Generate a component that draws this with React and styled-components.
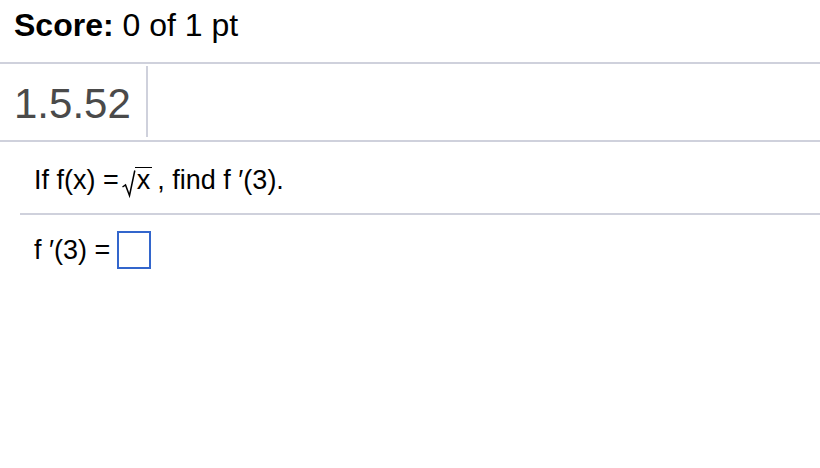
import React from 'react'
import styled, { createGlobalStyle } from 'styled-components'

const GlobalStyle = createGlobalStyle`
  html, body {
    margin: 0;
    padding: 0;
    background: #fff;
  }
  body {
    font-family: "Liberation Sans", Arial, Helvetica, sans-serif;
    color: #000;
  }
`

const Page = styled.div`
  width: 820px;
  height: 468px;
  overflow: hidden;
  background: #fff;
`

const ScoreBar = styled.div`
  height: 64px;
  box-sizing: border-box;
  padding: 7px 0 0 14px;
  font-size: 32px;
  line-height: 36px;
  border-bottom: 2px solid #cfd1dc;
`

const Label = styled.span`
  font-weight: bold;
`

const NumberRow = styled.div`
  display: flex;
  height: 78px;
  box-sizing: border-box;
  border-bottom: 2px solid #cfd1dc;
`

const NumberCell = styled.div`
  box-sizing: border-box;
  width: 148px;
  margin: 2px 0 3px;
  padding: 12px 0 0 14px;
  border-right: 2px solid #cfd1dc;
  font-size: 42px;
  line-height: 52px;
  color: #4a4a4a;
`

const Question = styled.div`
  margin-left: 20px;
  height: 73px;
  box-sizing: border-box;
  padding: 22px 0 0 14px;
  font-size: 27px;
  line-height: 32px;
  border-bottom: 2px solid #cfd1dc;
`

const Radical = styled.span`
  display: inline-block;
  position: relative;
  margin: 0 5px 0 3px;
  padding-left: 13px;
`

const RadicalSign = styled.svg`
  position: absolute;
  left: 0;
  bottom: 0;
  width: 13px;
  height: 26px;
  overflow: visible;
`

const Radicand = styled.span`
  display: inline-block;
  border-top: 1px solid #000;
  line-height: 24px;
  padding: 0 2px 0 2px;
`

const Answer = styled.div`
  display: flex;
  align-items: center;
  gap: 7px;
  padding: 16px 0 0 34px;
  font-size: 27px;
`

const AnswerBox = styled.span`
  display: inline-block;
  box-sizing: border-box;
  width: 34px;
  height: 38px;
  border: 2px solid #3366cc;
`

function Sqrt({ children }) {
  return (
    <Radical>
      <RadicalSign viewBox="0 0 13 26">
        <path
          d="M0.5 17 L3.5 15 L7.5 25.5 L12.8 0.5"
          fill="none"
          stroke="#000"
          strokeWidth="1.5"
          strokeLinejoin="miter"
        />
      </RadicalSign>
      <Radicand>{children}</Radicand>
    </Radical>
  )
}

export default function App() {
  return (
    <Page>
      <GlobalStyle />
      <ScoreBar>
        <Label>Score:</Label> 0 of 1 pt
      </ScoreBar>
      <NumberRow>
        <NumberCell>1.5.52</NumberCell>
      </NumberRow>
      <Question>
        If f(x) =<Sqrt>x</Sqrt>, find f ′(3).
      </Question>
      <Answer>
        <span>f ′(3) =</span>
        <AnswerBox />
      </Answer>
    </Page>
  )
}
